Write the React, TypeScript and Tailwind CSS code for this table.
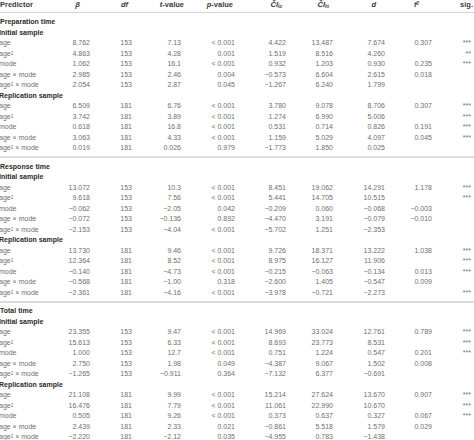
import React from "react";

type Row = [string, string, string, string, string, string, string, string, string, string];

const sections: {
  title: string;
  groups: { name: string; rows: Row[] }[];
}[] = [
  {
    title: "Preparation time",
    groups: [
      {
        name: "Initial sample",
        rows: [
          ["age", "8.762", "153", "7.13", "< 0.001", "4.422", "13.487", "7.674", "0.307", "***"],
          ["age²", "4.863", "153", "4.28", "0.001", "1.519", "8.516", "4.260", "", "**"],
          ["mode", "1.062", "153", "16.1", "< 0.001", "0.932", "1.203", "0.930", "0.235", "***"],
          ["age × mode", "2.985", "153", "2.46", "0.004", "−0.573", "6.604", "2.615", "0.018", ""],
          ["age² × mode", "2.054", "153", "2.87", "0.045", "−1.267", "6.240", "1.799", "", ""],
        ],
      },
      {
        name: "Replication sample",
        rows: [
          ["age", "6.509", "181", "6.76", "< 0.001", "3.780", "9.078", "8.706", "0.307", "***"],
          ["age²", "3.742", "181", "3.89", "< 0.001", "1.274", "6.990", "5.006", "", "***"],
          ["mode", "0.618", "181", "16.8", "< 0.001", "0.531", "0.714", "0.826", "0.191", "***"],
          ["age × mode", "3.063", "181", "4.33", "< 0.001", "1.159", "5.029", "4.097", "0.045", "***"],
          ["age² × mode", "0.019", "181", "0.026", "0.979", "−1.773", "1.850", "0.025", "", ""],
        ],
      },
    ],
  },
  {
    title: "Response time",
    groups: [
      {
        name: "Initial sample",
        rows: [
          ["age", "13.072", "153", "10.3", "< 0.001", "8.451", "19.062", "14.291", "1.178", "***"],
          ["age²", "9.618", "153", "7.56", "< 0.001", "5.441", "14.705", "10.515", "", "***"],
          ["mode", "−0.062", "153", "−2.05", "0.042", "−0.209", "0.060", "−0.068", "−0.003", ""],
          ["age × mode", "−0.072", "153", "−0.136", "0.892", "−4.470", "3.191", "−0.079", "−0.010", ""],
          ["age² × mode", "−2.153", "153", "−4.04", "< 0.001", "−5.702", "1.251", "−2.353", "", ""],
        ],
      },
      {
        name: "Replication sample",
        rows: [
          ["age", "13.730", "181", "9.46", "< 0.001", "9.726", "18.371", "13.222", "1.038", "***"],
          ["age²", "12.364", "181", "8.52", "< 0.001", "8.975", "16.127", "11.906", "", "***"],
          ["mode", "−0.140", "181", "−4.73", "< 0.001", "−0.215", "−0.063", "−0.134", "0.013", "***"],
          ["age × mode", "−0.568", "181", "−1.00", "0.318", "−2.600", "1.405", "−0.547", "0.009", ""],
          ["age² × mode", "−2.361", "181", "−4.16", "< 0.001", "−3.978", "−0.721", "−2.273", "", "***"],
        ],
      },
    ],
  },
  {
    title: "Total time",
    groups: [
      {
        name: "Initial sample",
        rows: [
          ["age", "23.355", "153", "9.47", "< 0.001", "14.969", "33.024", "12.761", "0.789", "***"],
          ["age²", "15.613", "153", "6.33", "< 0.001", "8.693", "23.773", "8.531", "", "***"],
          ["mode", "1.000", "153", "12.7", "< 0.001", "0.751", "1.224", "0.547", "0.201", "***"],
          ["age × mode", "2.750", "153", "1.98", "0.049", "−4.387", "9.067", "1.502", "0.008", ""],
          ["age² × mode", "−1.265", "153", "−0.911", "0.364", "−7.132", "6.377", "−0.691", "", ""],
        ],
      },
      {
        name: "Replication sample",
        rows: [
          ["age", "21.108", "181", "9.99", "< 0.001", "15.214", "27.624", "13.670", "0.907", "***"],
          ["age²", "16.476", "181", "7.79", "< 0.001", "11.061", "22.990", "10.670", "", "***"],
          ["mode", "0.505", "181", "9.26", "< 0.001", "0.373", "0.637", "0.327", "0.067", "***"],
          ["age × mode", "2.439", "181", "2.33", "0.021", "−0.861", "5.518", "1.579", "0.029", ""],
          ["age² × mode", "−2.220", "181", "−2.12", "0.035", "−4.955", "0.783", "−1.438", "", ""],
        ],
      },
    ],
  },
];

const grid = "grid grid-cols-[60px_32px_44px_50px_52px_50px_48px_52px_46px_40px]";

// right padding of the data cells, per column
const cellPad = ["", "pr-[2px]", "pr-[4px]", "pr-[5px]", "pr-[3px]", "pr-[2px]", "pr-[3px]", "pr-[3px]", "pr-[2px]", "pr-[3px]"];

function Label({ text }: { text: string }) {
  // superscript the ² like the source table
  if (!text.includes("²")) return <>{text}</>;
  const [a, b] = text.split("²");
  return (
    <>
      {a}
      <sup className="text-[4.5px] relative -top-[1px]">2</sup>
      {b}
    </>
  );
}

function DataRow({ row }: { row: Row }) {
  return (
    <div className={clsx(grid, "h-[10.5px] leading-[10.5px] text-[#6f6f6f]")}>
      <div className="-ml-px whitespace-nowrap">
        <Label text={row[0]} />
      </div>
      {row.slice(1).map((v, i) => (
        <div key={i} className={clsx("text-right whitespace-nowrap", cellPad[i + 1])}>
          {v}
        </div>
      ))}
    </div>
  );
}

function clsx(...c: string[]) {
  return c.filter(Boolean).join(" ");
}

export default function App() {
  return (
    <div className="w-[474px] h-[440px] overflow-hidden bg-white text-[7px] font-['Liberation_Sans',Arial,sans-serif]">
      {/* header */}
      <div className={clsx(grid, "h-[13px] leading-[10px] border-b border-[#d4d4d4] text-[#3a3a3a] text-[7.5px] font-bold")}>
        <div>Predictor</div>
        <div className="text-right pr-[12px] italic">β</div>
        <div className="text-right pr-[8px] italic">df</div>
        <div className="text-right pr-[2px]">
          <span className="italic">t</span>-value
        </div>
        <div className="text-right pr-[5px]">
          <span className="italic">p</span>-value
        </div>
        <div className="text-right pr-[6px] italic">
          ČI<sub className="text-[4.5px]">lo</sub>
        </div>
        <div className="text-right pr-[7px] italic">
          ČI<sub className="text-[4.5px]">hi</sub>
        </div>
        <div className="text-right pr-[12px] italic">d</div>
        <div className="text-right pr-[15px] italic">
          f<sup className="text-[4.5px]">2</sup>
        </div>
        <div className="text-right pr-[1px]">sig.</div>
      </div>

      <div className="pt-[4px]">
        {sections.map((s, si) => (
          <div
            key={s.title}
            className={clsx(
              si < sections.length - 1 ? "border-b-2 border-[#dcdcdc] pb-[2.5px] mb-[3.5px]" : ""
            )}
          >
            <div className="h-[10.5px] leading-[10.5px] font-bold text-[#2b2b2b]">{s.title}</div>
            {s.groups.map((g) => (
              <div key={g.name}>
                <div className="h-[10.5px] leading-[10.5px] -ml-px font-bold text-[#2b2b2b]">{g.name}</div>
                {g.rows.map((r, ri) => (
                  <DataRow key={ri} row={r} />
                ))}
              </div>
            ))}
          </div>
        ))}
      </div>
    </div>
  );
}
